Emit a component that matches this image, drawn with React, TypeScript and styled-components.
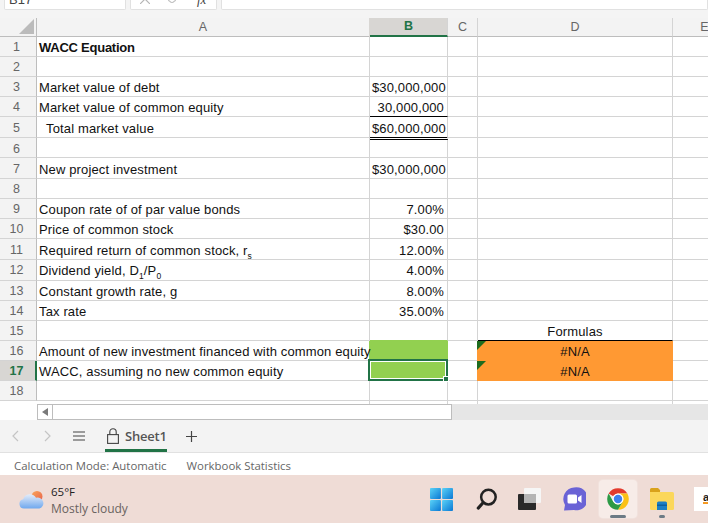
import React, { FC } from 'react';
import styled, { createGlobalStyle } from 'styled-components';

const GlobalStyle = createGlobalStyle`
  html, body {
    margin: 0;
    padding: 0;
    background: #fff;
  }
`;

const Page = styled.div`
  width: 708px;
  height: 523px;
  overflow: hidden;
  display: flex;
  flex-direction: column;
  font-family: 'Liberation Sans', Arial, sans-serif;
  color: #111;
`;

const FormulaBar = styled.div`
  height: 18px;
  flex: none;
  background: #f4f4f4;
  display: flex;
  align-items: flex-start;
  gap: 4px;
  padding-left: 4px;
`;

const FormulaBox = styled.div<{ $width?: number }>`
  background: #fff;
  height: 10px;
  border: 1px solid #e1e1e1;
  border-top: 0;
  border-radius: 0 0 2px 2px;
  box-sizing: border-box;
  overflow: hidden;
  display: flex;
  align-items: flex-end;
  flex: ${(p) => (p.$width ? `0 0 ${p.$width}px` : '1')};
  padding: 0 0 5px 4px;
  font-size: 13px;
  line-height: 9px;
  color: #444;
`;

const FormulaMark = styled.svg<{ $left: number }>`
  flex: none;
  align-self: flex-start;
  margin-left: ${(p) => p.$left}px;
  margin-bottom: -5px;
`;

const FxLabel = styled.span`
  margin-left: 21px;
  font-family: 'Liberation Serif', serif;
  font-style: italic;
  color: #444;
`;

const Sheet = styled.div`
  display: grid;
  flex: none;
  grid-template-columns: 37px 333px 78px 30px 195px 64px;
  grid-template-rows: 19px 20px 20px 20px 20px 21px 20px 21px 20px 20px 20px 21px 21px 20px 20px 20px 20px 20px 20px 3px;
  width: 737px;
`;

const Corner = styled.div`
  background: #f3f3f3;
  border-right: 1px solid #bdbdbd;
  border-bottom: 1px solid #bdbdbd;
  box-sizing: border-box;
  display: flex;
  align-items: flex-end;
  justify-content: flex-end;
  padding: 0 2px 2px 0;
`;

const CornerMark = styled.div`
  width: 0;
  height: 0;
  border-style: solid;
  border-width: 0 0 15px 15px;
  border-color: transparent transparent #bbbbbb transparent;
`;

const ColHead = styled.div<{ $active?: boolean }>`
  position: relative;
  background: ${(p) => (p.$active ? '#d8d6d3' : '#f3f3f3')};
  color: ${(p) => (p.$active ? '#217346' : '#666')};
  font-weight: ${(p) => (p.$active ? 700 : 400)};
  font-size: 12.5px;
  border-right: 1px solid #d4d4d4;
  border-bottom: ${(p) => (p.$active ? '2px solid #217346' : '1px solid #bdbdbd')};
  ${(p) => p.$active && 'box-shadow: -1px 0 0 #d8d6d3, -1px 1px 0 #217346;'}
  box-sizing: border-box;
  display: flex;
  align-items: center;
  justify-content: center;
  padding-bottom: 1px;
`;

const RowHead = styled.div<{ $active?: boolean; $tall?: boolean }>`
  background: ${(p) => (p.$active ? '#d8d6d3' : '#f3f3f3')};
  color: ${(p) => (p.$active ? '#217346' : '#666')};
  font-weight: ${(p) => (p.$active ? 700 : 400)};
  font-size: 12.5px;
  border-right: ${(p) => (p.$active ? '2px solid #217346' : '1px solid #bdbdbd')};
  border-bottom: 1px solid #d4d4d4;
  box-sizing: border-box;
  display: flex;
  align-items: center;
  justify-content: center;
  padding-right: ${(p) => (p.$active ? 2 : 3)}px;
  padding-top: ${(p) => (p.$tall ? 2 : 0)}px;
`;

const HeadTail = styled.div`
  background: #fff;
`;

const Cell = styled.div<{
  $align?: 'left' | 'right' | 'center';
  $fill?: string;
  $bold?: boolean;
  $indent?: boolean;
  $edge?: string;
  $double?: boolean;
  $flag?: boolean;
  $open?: boolean;
  $tall?: boolean;
}>`
  position: relative;
  box-sizing: border-box;
  background: ${(p) => p.$fill ?? '#fff'};
  border-right: 1px solid ${(p) => (p.$fill ? p.$fill : p.$open ? 'transparent' : '#d4d4d4')};
  border-bottom: 1px solid ${(p) => p.$edge ?? p.$fill ?? '#d4d4d4'};
  ${(p) => p.$fill && `box-shadow: -1px 0 0 ${p.$fill};`}
  ${(p) => p.$double && 'border-bottom: 3px double #000; margin-bottom: -2px; z-index: 1;'}
  font-size: 13px;
  letter-spacing: ${(p) => (p.$bold ? '-0.25px' : '0.14px')};
  font-weight: ${(p) => (p.$bold ? 700 : 400)};
  line-height: ${(p) => (p.$tall ? 23 : 21)}px;
  white-space: nowrap;
  padding: ${(p) => (p.$indent ? '0 2px 0 9px' : p.$align === 'right' ? '0 3px 0 2px' : '0 2px')};
  text-align: ${(p) => p.$align ?? 'left'};
  ${(p) => p.$open && 'z-index: 1; background: transparent;'}
  ${(p) =>
    p.$flag &&
    `&::before {
      content: '';
      position: absolute;
      left: -1px;
      top: 0;
      border-style: solid;
      border-width: 9px 9px 0 0;
      border-color: #1e6b1e transparent transparent transparent;
    }`}
`;

const TailCell = styled.div`
  background: #fff;
  border-right: 1px solid #d4d4d4;
`;

const Selection = styled.div`
  position: absolute;
  inset: -2px -1px -1px -2px;
  border: 2px solid #217346;
  box-shadow: inset 0 0 0 1px #fff;
  z-index: 2;
`;

const Handle = styled.div`
  position: absolute;
  right: -3px;
  bottom: -3px;
  width: 4px;
  height: 4px;
  background: #217346;
  border: 1px solid #fff;
`;

const Sub = styled.sub`
  font-size: 8.5px;
  line-height: 0;
`;

const ScrollRow = styled.div`
  flex: none;
  height: 16px;
  display: flex;
  padding-left: 37px;
  background: #fff;
`;

const ScrollLeft = styled.div`
  width: 15px;
  box-sizing: border-box;
  border: 1px solid #bdbdbd;
  border-right: 0;
  display: flex;
  align-items: center;
  justify-content: center;
  background: #fff;
`;

const LeftArrow = styled.div`
  width: 0;
  height: 0;
  border-style: solid;
  border-width: 4px 6px 4px 0;
  border-color: transparent #7a7a7a transparent transparent;
`;

const ScrollThumb = styled.div`
  width: 400px;
  box-sizing: border-box;
  border: 1px solid #bdbdbd;
  background: #fff;
`;

const ScrollTrack = styled.div`
  flex: 1;
  background: #e6e6e6;
`;

const TabBar = styled.div`
  flex: none;
  height: 33px;
  background: #f3f3f3;
  border-bottom: 1px solid #e1e1e1;
  box-sizing: border-box;
  display: flex;
  align-items: stretch;
  color: #444;
`;

const NavIcon = styled.div<{ $left: number }>`
  display: flex;
  align-items: center;
  margin-left: ${(p) => p.$left}px;
`;

const Tab = styled.div`
  display: flex;
  align-items: center;
  gap: 6px;
  margin-left: 20px;
  padding: 3px 0 0 2px;
  border-bottom: 3px solid #217346;
  font-family: 'Open Sans', sans-serif;
  font-size: 13px;
  font-weight: 600;
  letter-spacing: -0.2px;
  color: #555;
  height: 32px;
  box-sizing: border-box;
`;

const StatusBar = styled.div`
  flex: none;
  height: 22px;
  background: #fff;
  display: flex;
  align-items: center;
  gap: 20px;
  padding: 2px 0 0 14px;
  box-sizing: border-box;
  font-family: 'Open Sans', sans-serif;
  font-size: 11.4px;
  color: #666;
`;

const Taskbar = styled.div`
  flex: 1;
  background: #efdcd6;
  display: flex;
  align-items: center;
  font-family: 'Open Sans', sans-serif;
`;

const Weather = styled.div`
  display: flex;
  align-items: center;
  gap: 7px;
  padding: 1px 0 0 19px;
  width: 420px;
  flex: none;
  box-sizing: border-box;
`;

const WeatherText = styled.div`
  display: flex;
  flex-direction: column;
  gap: 2px;
  font-size: 11.5px;
  line-height: 15px;
  color: #222;
`;

const WeatherSub = styled.span`
  color: #6a6360;
  font-size: 12px;
`;

const Tray = styled.div`
  display: flex;
  align-items: center;
`;

const TrayIcon = styled.div<{ $width: number; $active?: boolean; $dot?: number }>`
  position: relative;
  width: ${(p) => p.$width}px;
  height: 38px;
  display: flex;
  align-items: center;
  justify-content: center;
  flex: none;
  border-radius: 4px;
  ${(p) => p.$active && 'margin-left: 3px; background: #f7ece8; box-shadow: 0 0 0 1px #f1e2dd;'}
  ${(p) =>
    p.$dot &&
    `&::after {
      content: '';
      position: absolute;
      left: 50%;
      bottom: 0;
      transform: translateX(-50%);
      width: ${p.$dot}px;
      height: 3px;
      border-radius: 2px;
      background: #6c7b85;
    }`}
`;

const AmazonTile = styled.div`
  position: relative;
  width: 14px;
  height: 24px;
  margin-left: 7px;
  background: #fff;
  font-family: 'Liberation Sans', sans-serif;
  font-size: 11px;
  font-weight: 700;
  color: #222;
  padding-left: 9px;
  line-height: 20px;
  flex: none;

  &::after {
    content: '';
    position: absolute;
    left: 9px;
    top: 15px;
    width: 5px;
    height: 2px;
    background: #f59a23;
  }
`;

const WindowsLogo = () => (
  <svg width="23" height="23" viewBox="0 0 24 24">
    <defs>
      <linearGradient id="winGrad" x1="0" y1="0" x2="1" y2="1">
        <stop offset="0" stopColor="#5ad2f7" />
        <stop offset="1" stopColor="#0a78d4" />
      </linearGradient>
    </defs>
    <rect x="0" y="0" width="11.4" height="11.4" rx="1" fill="url(#winGrad)" />
    <rect x="12.6" y="0" width="11.4" height="11.4" rx="1" fill="url(#winGrad)" />
    <rect x="0" y="12.6" width="11.4" height="11.4" rx="1" fill="url(#winGrad)" />
    <rect x="12.6" y="12.6" width="11.4" height="11.4" rx="1" fill="url(#winGrad)" />
  </svg>
);

const SearchGlyph = () => (
  <svg width="23" height="23" viewBox="0 0 24 24" fill="none" stroke="#222" strokeWidth="2.6" strokeLinecap="round">
    <circle cx="14" cy="9.5" r="7.6" />
    <path d="M8.6 15.2 L3.4 21" strokeWidth="3.2" />
  </svg>
);

const TaskViewGlyph = () => (
  <svg width="24" height="24" viewBox="0 0 24 24">
    <rect x="6" y="1" width="17" height="15" rx="1" fill="#f6f6f6" />
    <rect x="0" y="7" width="18" height="16" rx="1" fill="#2a2a2a" />
    <rect x="6" y="7" width="12" height="9" fill="#b5b5b5" />
  </svg>
);

const ChatGlyph = () => (
  <svg width="24" height="24" viewBox="0 0 24 24">
    <path d="M12 0.5 A11.5 11.5 0 1 1 12 23 L2 23.5 L3 18 A11.5 11.5 0 0 1 12 0.5 Z" fill="#6a63d6" />
    <rect x="5.5" y="7.5" width="9.5" height="9" rx="1.5" fill="#fff" />
    <path d="M16 10.5 L19.5 8 V16 L16 13.5 Z" fill="#fff" />
  </svg>
);

const ChromeGlyph = () => (
  <svg width="26" height="26" viewBox="0 0 48 48">
    <path d="M24 4 A20 20 0 0 1 41.3 14 L24 14 A10 10 0 0 0 15.3 19 L6.7 14 A20 20 0 0 1 24 4 Z" fill="#e33b2e" />
    <path d="M41.3 14 A20 20 0 0 1 24 44 L32.7 29 A10 10 0 0 0 24 14 Z" fill="#fbc116" />
    <path d="M6.7 14 L15.3 29 A10 10 0 0 0 32.7 29 L24 44 A20 20 0 0 1 6.7 14 Z" fill="#2d9a46" />
    <circle cx="24" cy="24" r="10" fill="#fff" />
    <circle cx="24" cy="24" r="7.8" fill="#3f80ee" />
  </svg>
);

const FolderGlyph = () => (
  <svg width="24" height="22" viewBox="0 0 24 22">
    <path d="M0 1.5 A1.5 1.5 0 0 1 1.5 0 H8 L10.5 2.5 H10 V5 H0 Z" fill="#d9a21b" />
    <path d="M0 4 H22.5 A1.5 1.5 0 0 1 24 5.5 V20.5 A1.5 1.5 0 0 1 22.5 22 H1.5 A1.5 1.5 0 0 1 0 20.5 Z" fill="#fbd75b" />
    <path d="M7 15 A1.5 1.5 0 0 1 8.5 13.5 H15.5 A1.5 1.5 0 0 1 17 15 V22 H7 Z" fill="#1b7fc4" />
    <rect x="7" y="16.5" width="10" height="1.5" fill="#0d5f9e" />
  </svg>
);

const CloudGlyph = () => (
  <svg width="25" height="18" viewBox="0 0 25 18">
    <defs>
      <linearGradient id="cloudGrad" x1="0" y1="0" x2="0" y2="1">
        <stop offset="0" stopColor="#e4ecf9" />
        <stop offset="1" stopColor="#6fa8ee" />
      </linearGradient>
      <linearGradient id="sunGrad" x1="0" y1="0" x2="1" y2="1">
        <stop offset="0" stopColor="#f9a65a" />
        <stop offset="1" stopColor="#e8604a" />
      </linearGradient>
    </defs>
    <circle cx="18" cy="5.5" r="5.5" fill="url(#sunGrad)" />
    <path d="M5 17.5 A4.7 4.7 0 0 1 4.2 8.2 A7 7 0 0 1 17 6.8 A5 5 0 0 1 20.5 17.5 Z" fill="url(#cloudGrad)" />
  </svg>
);

type Row = {
  label?: React.ReactNode;
  indent?: boolean;
  bold?: boolean;
  value?: string;
  double?: boolean;
  edge?: string;
  tall?: boolean;
};

const rows: Row[] = [
  { label: 'WACC Equation', bold: true },
  {},
  { label: 'Market value of debt', value: '$30,000,000' },
  { label: 'Market value of common equity', value: '30,000,000', edge: '#000' },
  { label: 'Total market value', indent: true, value: '$60,000,000', double: true, tall: true },
  {},
  { label: 'New project investment', value: '$30,000,000', tall: true },
  {},
  { label: 'Coupon rate of of par value bonds', value: '7.00%' },
  { label: 'Price of common stock', value: '$30.00' },
  { label: <>Required return of common stock, r<Sub>s</Sub></>, value: '12.00%', tall: true },
  { label: <>Dividend yield, D<Sub>1</Sub>/P<Sub>0</Sub></>, value: '4.00%' },
  { label: 'Constant growth rate, g', value: '8.00%' },
  { label: 'Tax rate', value: '35.00%' },
];

const GREEN = '#92d050';
const ORANGE = '#ff9933';

const App: FC = () => {
  return (
    <Page>
      <GlobalStyle />
      <FormulaBar>
        <FormulaBox $width={122}>B17</FormulaBox>
        <FormulaBox $width={87}>
          <FormulaMark $left={5} width="10" height="4" viewBox="0 6 10 4" fill="none" stroke="#b5b5b5" strokeWidth="1.2">
            <path d="M0 0 L10 10 M10 0 L0 10" />
          </FormulaMark>
          <FormulaMark $left={18} width="8" height="3" viewBox="0 0 8 3" fill="none" stroke="#c4c4c4" strokeWidth="1.2">
            <path d="M0 0 L4 3 L8 0" />
          </FormulaMark>
          <FxLabel>fx</FxLabel>
        </FormulaBox>
        <FormulaBox />
      </FormulaBar>
      <Sheet>
        <Corner>
          <CornerMark />
        </Corner>
        <ColHead>A</ColHead>
        <ColHead $active>B</ColHead>
        <ColHead>C</ColHead>
        <ColHead>D</ColHead>
        <ColHead>E</ColHead>

        {rows.map((row, i) => (
          <React.Fragment key={i}>
            <RowHead $tall={i === 4 || i === 5 || i === 6 || i === 10}>{i + 1}</RowHead>
            <Cell $bold={row.bold} $indent={row.indent} $tall={row.tall}>
              {row.label}
            </Cell>
            <Cell $align="right" $double={row.double} $edge={row.edge} $tall={row.tall}>
              {row.value}
            </Cell>
            <Cell />
            <Cell />
            <Cell />
          </React.Fragment>
        ))}

        <RowHead>15</RowHead>
        <Cell />
        <Cell $edge={GREEN} />
        <Cell />
        <Cell $align="center" $edge="#000">
          Formulas
        </Cell>
        <Cell />

        <RowHead>16</RowHead>
        <Cell $open>Amount of new investment financed with common equity</Cell>
        <Cell $fill={GREEN} />
        <Cell />
        <Cell $align="center" $fill={ORANGE} $flag>
          #N/A
        </Cell>
        <Cell />

        <RowHead $active>17</RowHead>
        <Cell>WACC, assuming no new common equity</Cell>
        <Cell $fill={GREEN}>
          <Selection>
            <Handle />
          </Selection>
        </Cell>
        <Cell />
        <Cell $align="center" $fill={ORANGE} $flag>
          #N/A
        </Cell>
        <Cell />

        <RowHead>18</RowHead>
        <Cell />
        <Cell />
        <Cell />
        <Cell />
        <Cell />

        <HeadTail />
        <TailCell />
        <TailCell />
        <TailCell />
        <TailCell />
        <TailCell />
      </Sheet>

      <ScrollRow>
        <ScrollLeft>
          <LeftArrow />
        </ScrollLeft>
        <ScrollThumb />
        <ScrollTrack />
      </ScrollRow>

      <TabBar>
        <NavIcon $left={11}>
          <svg width="10" height="14" viewBox="0 0 10 14" fill="none" stroke="#c4c4c4" strokeWidth="1.2">
            <path d="M7 2 L2 7 L7 12" />
          </svg>
        </NavIcon>
        <NavIcon $left={21}>
          <svg width="10" height="14" viewBox="0 0 10 14" fill="none" stroke="#c4c4c4" strokeWidth="1.2">
            <path d="M3 2 L8 7 L3 12" />
          </svg>
        </NavIcon>
        <NavIcon $left={21}>
          <svg width="12" height="10" viewBox="0 0 12 10" fill="none" stroke="#444" strokeWidth="1.2">
            <path d="M0 1 H12 M0 5 H12 M0 9 H12" />
          </svg>
        </NavIcon>
        <Tab>
          <svg width="12" height="16" viewBox="0 0 12 16" fill="none" stroke="#444" strokeWidth="1.1">
            <rect x="0.6" y="6.6" width="10.8" height="8.8" />
            <path d="M2.8 6.5 V4 A3.2 3.2 0 0 1 9.2 4 V6.5" />
          </svg>
          Sheet1
        </Tab>
        <NavIcon $left={19}>
          <svg width="11" height="11" viewBox="0 0 11 11" fill="none" stroke="#444" strokeWidth="1.2">
            <path d="M5.5 0 V11 M0 5.5 H11" />
          </svg>
        </NavIcon>
      </TabBar>

      <StatusBar>
        <span>Calculation Mode: Automatic</span>
        <span>Workbook Statistics</span>
      </StatusBar>

      <Taskbar>
        <Weather>
          <CloudGlyph />
          <WeatherText>
            <span>65°F</span>
            <WeatherSub>Mostly cloudy</WeatherSub>
          </WeatherText>
        </Weather>
        <Tray>
          <TrayIcon $width={43}>
            <WindowsLogo />
          </TrayIcon>
          <TrayIcon $width={46}>
            <SearchGlyph />
          </TrayIcon>
          <TrayIcon $width={42}>
            <TaskViewGlyph />
          </TrayIcon>
          <TrayIcon $width={45}>
            <ChatGlyph />
          </TrayIcon>
          <TrayIcon $width={38} $active $dot={16}>
            <ChromeGlyph />
          </TrayIcon>
          <TrayIcon $width={50} $dot={6}>
            <FolderGlyph />
          </TrayIcon>
          <AmazonTile>a</AmazonTile>
        </Tray>
      </Taskbar>
    </Page>
  );
};

export default App;
